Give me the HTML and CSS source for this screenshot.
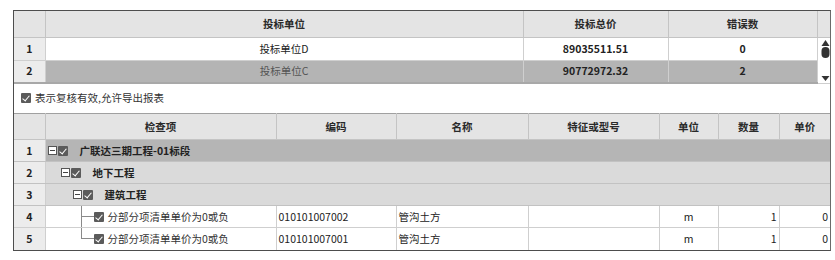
FILE: index.html
```html
<!DOCTYPE html>
<html lang="zh-CN">
<head>
  <meta charset="UTF-8" />
  <title>投标单位复核</title>
  <link rel="stylesheet" href="styles.css">
</head>
<body>
  <div class="frame">
    <table class="grid bidders">
      <colgroup>
        <col style="width:31px"><col style="width:478px"><col style="width:145px"><col style="width:149px"><col style="width:13px">
      </colgroup>
      <thead>
        <tr>
          <th class="num"></th>
          <th>投标单位</th>
          <th>投标总价</th>
          <th>错误数</th>
          <th class="scroll-head"></th>
        </tr>
      </thead>
      <tbody>
        <tr>
          <td class="num">1</td>
          <td class="center">投标单位D</td>
          <td class="center strong">89035511.51</td>
          <td class="center strong">0</td>
          <td class="scrollbar" rowspan="2">
            <svg width="11" height="44" viewBox="0 0 11 44">
              <path d="M5.5 1 L9.5 7 L1.5 7 Z" fill="#333"/>
              <rect x="1.5" y="8" width="8" height="11" rx="4" fill="#333"/>
              <path d="M1.5 37 L9.5 37 L5.5 42 Z" fill="#333"/>
            </svg>
          </td>
        </tr>
        <tr class="selected">
          <td class="num">2</td>
          <td class="center muted">投标单位C</td>
          <td class="center strong">90772972.32</td>
          <td class="center strong">2</td>
        </tr>
      </tbody>
    </table>

    <div class="confirm">
      <span class="check"></span>
      <span>表示复核有效,允许导出报表</span>
    </div>

    <table class="grid checks">
      <colgroup>
        <col style="width:31px"><col style="width:231px"><col style="width:120px"><col style="width:132px"><col style="width:131px"><col style="width:59px"><col style="width:61px"><col style="width:51px">
      </colgroup>
      <thead>
        <tr>
          <th class="num"></th>
          <th>检查项</th>
          <th>编码</th>
          <th>名称</th>
          <th>特征或型号</th>
          <th>单位</th>
          <th>数量</th>
          <th>单价</th>
        </tr>
      </thead>
      <tbody>
        <tr class="group dark">
          <td class="num">1</td>
          <td colspan="7">
            <div class="tree lvl1"><span class="expander"></span><span class="check"></span><span class="label">广联达三期工程-01标段</span></div>
          </td>
        </tr>
        <tr class="group">
          <td class="num">2</td>
          <td colspan="7">
            <div class="tree lvl2"><span class="expander"></span><span class="check"></span><span class="label">地下工程</span></div>
          </td>
        </tr>
        <tr class="group">
          <td class="num">3</td>
          <td colspan="7">
            <div class="tree lvl3"><span class="expander"></span><span class="check"></span><span class="label">建筑工程</span></div>
          </td>
        </tr>
        <tr>
          <td class="num">4</td>
          <td><div class="tree leaf"><span class="elbow mid"></span><span class="check"></span><span class="item">分部分项清单单价为0或负</span></div></td>
          <td>010101007002</td>
          <td>管沟土方</td>
          <td></td>
          <td class="center">m</td>
          <td class="right">1</td>
          <td class="right">0</td>
        </tr>
        <tr>
          <td class="num">5</td>
          <td><div class="tree leaf"><span class="elbow last"></span><span class="check"></span><span class="item">分部分项清单单价为0或负</span></div></td>
          <td>010101007001</td>
          <td>管沟土方</td>
          <td></td>
          <td class="center">m</td>
          <td class="right">1</td>
          <td class="right">0</td>
        </tr>
      </tbody>
    </table>
  </div>
</body>
</html>
```

FILE: styles.css
```css
* {
  box-sizing: border-box;
}
html, body {
  margin: 0;
  padding: 0;
  background: #fff;
  font-family: "Noto Sans CJK SC", "Noto Sans", sans-serif;
  font-size: 10.5px;
  color: #222;
}
.frame {
  width: 818px;
  margin: 10px 0 0 13px;
  border: 1px solid #4d4d4d;
  border-right-color: #6a6a6a;
  background: #fff;
}
.grid {
  width: 816px;
  table-layout: fixed;
  border-collapse: collapse;
}
.grid th, .grid td {
  padding: 0 2px;
  border: 1px solid #cfcfcf;
  white-space: nowrap;
  overflow: hidden;
  line-height: 20px;
}
.grid th {
  height: 26px;
  background: #e4e4e4;
  font-weight: bold;
  color: #2a2a2a;
  border-color: #c4c4c4;
}
.grid td {
  height: 22px;
}
.grid tr > :first-child {
  border-left: none;
}
.grid tr > :last-child {
  border-right: none;
}
.num {
  background: #ececec;
  text-align: center;
  font-weight: bold;
  color: #222;
}
th.num {
  background: #e4e4e4;
}
.center {
  text-align: center;
}
.right {
  text-align: right;
}
.strong {
  font-weight: bold;
}
.muted {
  color: #555;
}
.bidders thead th {
  border-top: none;
}
.bidders tbody tr:last-child td {
  border-bottom: 2px solid #a8a8a8;
}
.bidders .selected td {
  background: #b4b4b4;
}
.bidders .selected td.num {
  background: #ececec;
}
.scrollbar {
  background: #fff;
  padding: 0;
  vertical-align: top;
  text-align: center;
}
.scrollbar svg {
  display: block;
  margin: 1px auto 0;
}
.bidders .scroll-head {
  border-left: 1px solid #c4c4c4;
}
.confirm {
  display: flex;
  align-items: center;
  gap: 4px;
  height: 29px;
  padding-left: 7px;
  padding-bottom: 2px;
  color: #333;
}
.checks thead th {
  border-top: 1px solid #a0a0a0;
}
.checks tbody tr:last-child td {
  border-bottom: none;
}
.checks .group td {
  background: #dadada;
  border-left: none;
  border-right: none;
  border-color: #c2c2c2;
}
.checks .group.dark td {
  background: #b5b5b5;
}
.checks .group td.num {
  background: #ececec;
  border-right: 1px solid #cfcfcf;
}
.tree {
  display: flex;
  align-items: center;
  height: 20px;
  font-weight: bold;
}
.tree .label {
  margin-left: 12px;
}
.lvl1 {
  padding-left: 0;
}
.lvl2 {
  padding-left: 13px;
}
.lvl3 {
  padding-left: 25px;
}
.leaf {
  font-weight: normal;
  height: 21px;
  align-items: stretch;
  padding-left: 33px;
}
.leaf .check {
  align-self: center;
}
.leaf .item {
  margin-left: 4px;
  align-self: center;
  color: #333;
}
.expander {
  width: 9px;
  height: 9px;
  border: 1px solid #555;
  background: #fff linear-gradient(#444, #444) center / 5px 1px no-repeat;
  margin-right: 1px;
}
.check {
  display: inline-block;
  width: 10px;
  height: 10px;
  background: #5b5b5b;
  border-radius: 1px;
  position: relative;
  flex: none;
}
.check::after {
  content: "";
  position: absolute;
  left: 3px;
  top: 1px;
  width: 3px;
  height: 6px;
  border: solid #fff;
  border-width: 0 1.5px 1.5px 0;
  transform: rotate(40deg);
}
.elbow {
  width: 13px;
  flex: none;
  background:
    linear-gradient(#8a8a8a, #8a8a8a) left top / 1px 100% no-repeat,
    linear-gradient(#8a8a8a, #8a8a8a) left center / 100% 1px no-repeat;
}
.elbow.last {
  background:
    linear-gradient(#8a8a8a, #8a8a8a) left top / 1px 50% no-repeat,
    linear-gradient(#8a8a8a, #8a8a8a) left center / 100% 1px no-repeat;
}
```
